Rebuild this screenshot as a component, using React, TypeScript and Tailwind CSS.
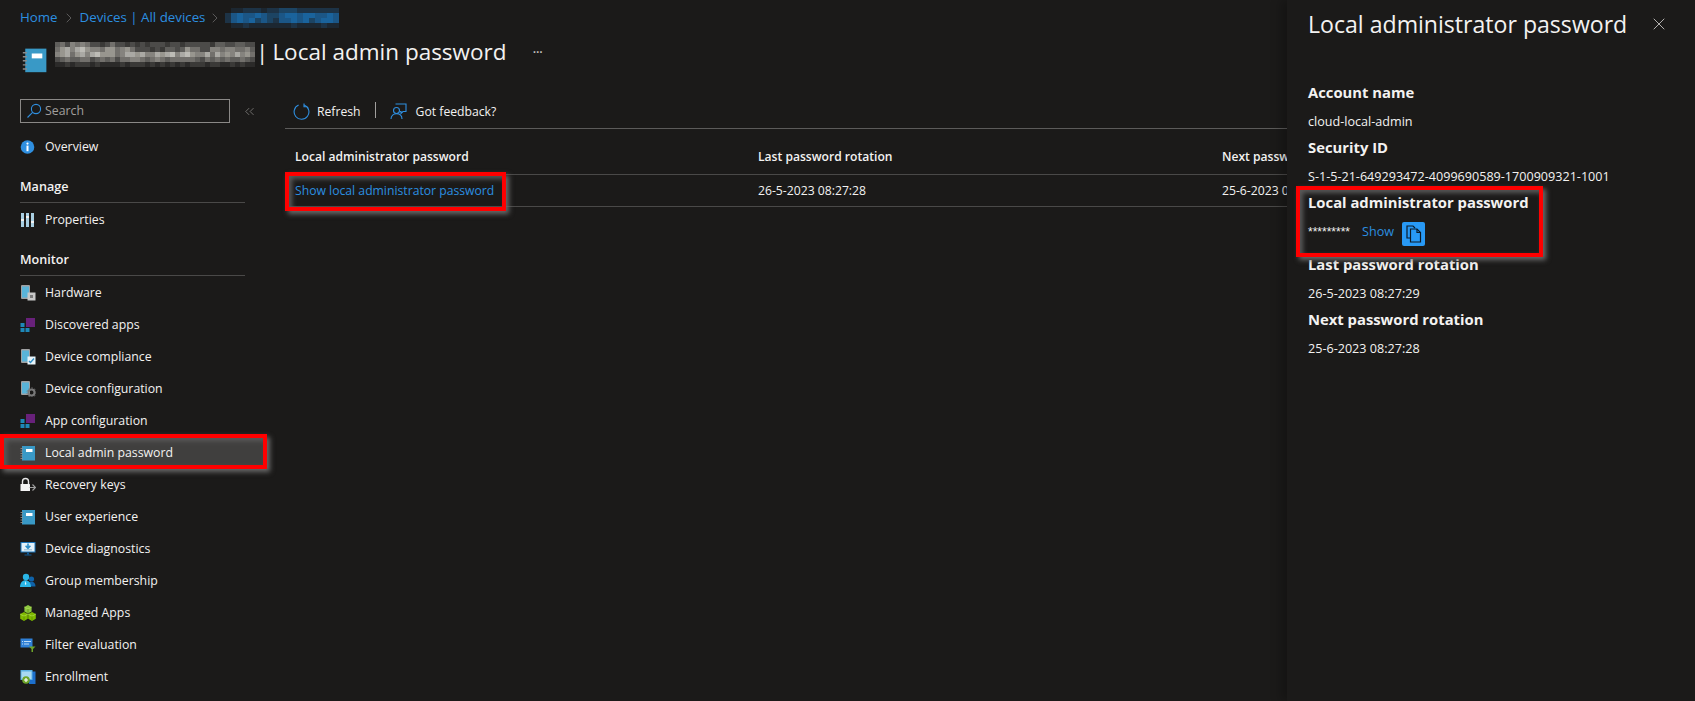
import { ChevronRight, ChevronsLeft, X } from "lucide-react";
import type { ReactNode } from "react";

const font = "font-['Open_Sans','Liberation_Sans',sans-serif]";

const grays = ["#1f1e1d", "#2b2a29", "#3a3937", "#4c4b49", "#5f5e5b", "#72706c", "#85837e", "#98968f", "#aaa9a4", "#bdbcb6"];
const blues = ["#1b1a19", "#1c2731", "#1d3346", "#1c4463", "#1b5686", "#1a639c"];

const titleBlur = [
  "4536565332353323232333233233333244334433",
  "5786897665775675333232443475533665665564",
  "6785786897775688786687896897668586768675",
  "3454455345453556654565455555435454544543",
  "1121222121111212221212121212221221121211",
];
const crumbBlur = ["0112221223332222222", "2454454334554554454", "2454534324454534554", "0112111111121111211"];

function Blur({ rows, colors, cell, cellH }: { rows: string[]; colors: string[]; cell: number; cellH: number }) {
  return (
    <svg width={rows[0].length * cell} height={rows.length * cellH} shapeRendering="crispEdges">
      {rows.map((r, y) =>
        r.split("").map((c, x) => <rect key={`${x}-${y}`} x={x * cell} y={y * cellH} width={cell} height={cellH} fill={colors[Number(c)]} />),
      )}
    </svg>
  );
}

function Phone({ children }: { children?: ReactNode }) {
  return (
    <svg width="16" height="16" viewBox="0 0 16 16">
      <rect x="1" y="0" width="9" height="14" rx="1" fill="#a0a1a2" />
      <rect x="2" y="1.5" width="7" height="11" fill="#59b4d9" />
      {children}
    </svg>
  );
}

const IconHardware = () => (
  <Phone>
    <rect x="7.5" y="7.5" width="8" height="8" fill="#c8c8c8" />
    <rect x="10" y="10" width="3" height="3" fill="#7a7a7a" />
  </Phone>
);
const IconCompliance = () => (
  <Phone>
    <rect x="7.5" y="7.5" width="8" height="8" fill="#e8f4fa" />
    <path d="M9 12l1.5 1.5L14 9.5" stroke="#2f8fc7" strokeWidth="1.4" fill="none" />
  </Phone>
);
const IconConfig = () => (
  <Phone>
    <circle cx="11.5" cy="11.5" r="3" fill="none" stroke="#7a7a7a" strokeWidth="2" />
    <circle cx="11.5" cy="11.5" r="4.6" fill="none" stroke="#7a7a7a" strokeWidth="1" strokeDasharray="1.4 1.6" />
  </Phone>
);
const IconApps = () => (
  <svg width="16" height="16" viewBox="0 0 16 16">
    <rect x="6" y="1" width="9" height="9" fill="#68217a" />
    <rect x="0.5" y="6" width="4" height="4" fill="#1e88b8" />
    <rect x="0.5" y="11" width="4" height="4" fill="#1e88b8" />
    <rect x="5.5" y="11" width="4" height="4" fill="#1e88b8" />
  </svg>
);
const IconNotebook = ({ size = 16 }: { size?: number }) => (
  <svg width={size} height={size} viewBox="0 0 16 16" preserveAspectRatio="none">
    <rect x="2" y="1" width="13" height="14.5" fill="#3999c6" />
    <path d="M0.5 3.5h2.5M0.5 6h2.5M0.5 8.5h2.5M0.5 11h2.5M0.5 13.5h2.5" stroke="#8c8c8c" strokeWidth="0.9" />
    <rect x="6" y="4" width="6.5" height="3" fill="#fff" />
  </svg>
);
const IconInfo = () => (
  <svg width="16" height="16" viewBox="0 0 16 16">
    <circle cx="7.5" cy="8" r="6.8" fill="#2f8fe0" />
    <circle cx="7.5" cy="4.6" r="1.1" fill="#fff" />
    <rect x="6.5" y="6.6" width="2" height="5.6" fill="#fff" />
  </svg>
);
const IconProps = () => (
  <svg width="16" height="16" viewBox="0 0 16 16">
    <rect x="1" y="1" width="3" height="14" fill="#a9cfe2" />
    <rect x="6" y="1" width="3" height="14" fill="#a9cfe2" />
    <rect x="11" y="1" width="3" height="14" fill="#a9cfe2" />
    <rect x="1" y="7" width="3" height="2" fill="#f2f2f2" />
    <rect x="6" y="4" width="3" height="2" fill="#f2f2f2" />
    <rect x="11" y="9" width="3" height="2" fill="#f2f2f2" />
  </svg>
);
const IconRecovery = () => (
  <svg width="16" height="16" viewBox="0 0 16 16">
    <path d="M2.5 7V4.5a3 3 0 0 1 6 0V7" stroke="#e6e6e6" strokeWidth="1.4" fill="none" />
    <rect x="0.5" y="7" width="9.5" height="7" rx="0.5" fill="#f4f4f4" />
    <path d="M9.5 10.5h6M12.5 7.5l3 3-3 3" stroke="#a0a0a0" strokeWidth="1.2" fill="none" />
  </svg>
);
const IconDiag = () => (
  <svg width="16" height="16" viewBox="0 0 16 16">
    <rect x="0.5" y="1" width="15" height="10.5" fill="#1b75bb" />
    <rect x="1.5" y="2" width="13" height="8.5" fill="#e4f2fa" />
    <path d="M8 2.5v4.5M5.6 4.8L8 7.4l2.4-2.6" stroke="#2f8fc7" strokeWidth="1.6" fill="none" />
    <rect x="4" y="8.3" width="8" height="1" fill="#8fb8d0" />
    <rect x="7" y="11.5" width="2" height="2" fill="#0f5a96" />
    <rect x="4.5" y="13.5" width="7" height="1" fill="#0f5a96" />
  </svg>
);
const IconGroup = () => (
  <svg width="16" height="16" viewBox="0 0 16 16">
    <circle cx="11.5" cy="6" r="2.6" fill="#0f62a8" />
    <path d="M7.5 13.5c0-3 1.5-4.7 4-4.7s4 1.7 4 4.7z" fill="#0f62a8" />
    <circle cx="6" cy="4" r="3.2" fill="#2ab5e5" />
    <path d="M0 14c0-4.2 2.5-6.8 5.5-6.8S11 9.8 11 14z" fill="#2ab5e5" />
    <path d="M5.6 8l-.8 3 .8 1 .8-1z" fill="#e4f6fc" />
  </svg>
);
const IconManaged = () => (
  <svg width="16" height="16" viewBox="0 0 16 16">
    <path d="M8 0l3.6 2v4.5L8 8.5 4.4 6.5V2z" fill="#8cc63f" />
    <path d="M4 7l3.8 2.1v4.7L4 16 0.2 13.8V9.1z" fill="#7fba00" />
    <path d="M12 7l3.8 2.1v4.7L12 16l-3.8-2.2V9.1z" fill="#7fba00" />
    <path d="M4.4 2L8 4l3.6-2M0.2 9.1L4 11.2l3.8-2.1M8.2 9.1L12 11.2l3.8-2.1" stroke="#b4e05a" strokeWidth="0.7" fill="none" />
    <path d="M4 11.2V16M12 11.2V16M8 4v4.5" stroke="#5a8a00" strokeWidth="0.7" />
  </svg>
);
const IconFilter = () => (
  <svg width="16" height="16" viewBox="0 0 16 16">
    <rect x="0.5" y="1.5" width="12" height="9" fill="#2f80d8" />
    <path d="M2 4.5h1M4 4.5h7M2 7h1M4 7h5" stroke="#cfe6f8" strokeWidth="0.9" />
    <path d="M9 9.5h6.5l-2.5 2.5v3h-1.5v-3z" fill="#6ea52a" />
  </svg>
);
const IconEnroll = () => (
  <svg width="16" height="16" viewBox="0 0 16 16">
    <rect x="9" y="2.5" width="6.5" height="12.5" fill="#1d6fcc" />
    <rect x="0.5" y="1" width="12" height="10" fill="#5bb0e3" />
    <rect x="1.5" y="2.5" width="10" height="7.5" fill="#a9d9f2" />
    <circle cx="6" cy="11" r="3.8" fill="#6ea52a" />
    <path d="M6 9v4M4 11h4" stroke="#fff" strokeWidth="1.2" />
  </svg>
);
const IconRefresh = () => (
  <svg width="17" height="17" viewBox="0 0 17 17" fill="none" stroke="#2f8fe0" strokeWidth="1.1">
    <path d="M5.6 2.1a7.4 7.4 0 1 0 5.6-.1" />
    <path d="M11 0.6v3.2H14" />
  </svg>
);
const IconFeedback = () => (
  <svg width="17" height="17" viewBox="0 0 17 17" fill="none" stroke="#2f8fe0" strokeWidth="1.1">
    <circle cx="6.5" cy="7.5" r="3" />
    <path d="M1 16c0-3.3 2.4-5.3 5.5-5.3S12 12.7 12 16" />
    <path d="M5.5 1H16v7.5h-3l-2 2v-2h-1" />
  </svg>
);
const IconCopy = () => (
  <svg width="16" height="18" viewBox="0 0 16 18" fill="none" stroke="#0b1a28" strokeWidth="1.2">
    <path d="M4 13H1V1h6l2 2" />
    <path d="M4.5 4h6.5l3.5 3.5V17h-10z" />
    <path d="M11 4v3.5h3.5" />
  </svg>
);
const IconSearch = () => (
  <svg width="16" height="16" viewBox="0 0 16 16" fill="none" stroke="#2f8fe0" strokeWidth="1.1">
    <circle cx="10" cy="6" r="4.6" />
    <path d="M6.6 9.4L1.5 14.5" />
  </svg>
);

function NavItem({ icon, label, active }: { icon: ReactNode; label: string; active?: boolean }) {
  return (
    <div className={`relative flex h-8 items-center pl-5 ${active ? "bg-[#403f3e]" : ""}`}>
      <span className="flex w-4 shrink-0 items-center justify-center">{icon}</span>
      <span className="ml-[9px] text-[12.3px] text-[#f3f2f1]">{label}</span>
      {active && (
        <div className="pointer-events-none absolute -top-[3px] left-0 h-[35px] w-[267px] border-4 border-[#ff0000] shadow-[3px_3px_5px_#6b6b6b,inset_3px_3px_5px_#5a5a5a]" />
      )}
    </div>
  );
}

function SectionHead({ label }: { label: string }) {
  return (
    <div className="mb-px ml-5 flex h-10 w-[225px] items-end border-b border-[#4a4948] pb-[5px] text-[12.6px] leading-5 font-semibold text-[#f3f2f1]">
      {label}
    </div>
  );
}

function Field({ label, value }: { label: string; value: string }) {
  return (
    <>
      <div className="h-[26px] text-[14.8px] leading-[24px] font-bold text-[#f3f2f1]">{label}</div>
      <div className="h-[29px] pt-[3px] text-[12.6px] leading-[26px] text-[#f3f2f1]">{value}</div>
    </>
  );
}

export default function App() {
  return (
    <div className={`relative flex h-[701px] w-[1695px] overflow-hidden bg-[#1b1a19] ${font}`}>
      <div className="w-[1287px] shrink-0 overflow-hidden">
        <div className="flex h-9 items-center pl-5 text-[13.3px] text-[#2b8fe0]">
          <span>Home</span>
          <ChevronRight className="mx-[3px] h-4 w-4 text-[#6b6a69]" strokeWidth={1.2} />
          <span>Devices | All devices</span>
          <ChevronRight className="mx-[2px] h-4 w-4 text-[#6b6a69]" strokeWidth={1.2} />
          <Blur rows={crumbBlur} colors={blues} cell={6} cellH={5} />
        </div>
        <div className="flex h-[63px] items-start pl-[22px]">
          <span className="mt-[11px]">
            <IconNotebook size={26} />
          </span>
          <div className="mt-[6px] ml-[7px] flex h-[24px]">
            <Blur rows={titleBlur} colors={grays} cell={5} cellH={5} />
          </div>
          <span className="ml-[1px] text-[22.5px] leading-[32px] text-[#f3f2f1]">|</span>
          <span className="ml-[4px] text-[22.5px] leading-[32px] text-[#f3f2f1]">Local admin password</span>
          <span className="ml-[26px] text-[15px] leading-[30px] tracking-tighter text-[#c8c6c4]">···</span>
        </div>
        <div className="flex">
          <aside className="w-[267px] shrink-0">
            <div className="flex items-center pl-5">
              <div className="flex h-6 w-[210px] items-center border border-[#8a8886] pl-[5px] text-[12.3px] text-[#a19f9d]">
                <IconSearch />
                <span className="ml-[3px] pt-px">Search</span>
              </div>
              <ChevronsLeft className="ml-[12px] h-[15px] w-[15px] text-[#8a8886]" strokeWidth={1.2} />
            </div>
            <div className="mt-2">
              <NavItem icon={<IconInfo />} label="Overview" />
            </div>
            <SectionHead label="Manage" />
            <NavItem icon={<IconProps />} label="Properties" />
            <SectionHead label="Monitor" />
            <NavItem icon={<IconHardware />} label="Hardware" />
            <NavItem icon={<IconApps />} label="Discovered apps" />
            <NavItem icon={<IconCompliance />} label="Device compliance" />
            <NavItem icon={<IconConfig />} label="Device configuration" />
            <NavItem icon={<IconApps />} label="App configuration" />
            <NavItem icon={<IconNotebook />} label="Local admin password" active />
            <NavItem icon={<IconRecovery />} label="Recovery keys" />
            <NavItem icon={<IconNotebook />} label="User experience" />
            <NavItem icon={<IconDiag />} label="Device diagnostics" />
            <NavItem icon={<IconGroup />} label="Group membership" />
            <NavItem icon={<IconManaged />} label="Managed Apps" />
            <NavItem icon={<IconFilter />} label="Filter evaluation" />
            <NavItem icon={<IconEnroll />} label="Enrollment" />
          </aside>
          <main className="ml-[18px] flex-1 text-[12.2px] text-[#f3f2f1]">
            <div className="flex h-[30px] items-start border-b border-[#5c5b5a] pl-2 leading-[26px]">
              <span className="flex h-6 items-center">
                <IconRefresh />
              </span>
              <span className="ml-[7px]">Refresh</span>
              <span className="mx-[14px] mt-[3px] h-[16px] w-px bg-[#a19f9d]" />
              <span className="flex h-6 items-center">
                <IconFeedback />
              </span>
              <span className="ml-[9px]">Got feedback?</span>
            </div>
            <div className="grid h-[46px] grid-cols-[463px_464px_1fr] items-center border-b border-[#4a4948] pt-[12px] pl-[10px] text-[12.1px] font-semibold whitespace-nowrap">
              <span>Local administrator password</span>
              <span>Last password rotation</span>
              <span>Next password rotation</span>
            </div>
            <div className="relative grid h-8 grid-cols-[463px_464px_1fr] items-center border-b border-[#4a4948] pt-[2px] pl-[10px] whitespace-nowrap">
              <span className="text-[#2b8fe0]">Show local administrator password</span>
              <span>26-5-2023 08:27:28</span>
              <span>25-6-2023 08:27:28</span>
              <div className="pointer-events-none absolute -top-[3px] left-0 h-[39px] w-[221px] border-4 border-[#ff0000] shadow-[3px_3px_5px_#6b6b6b,inset_3px_3px_5px_#5a5a5a]" />
            </div>
          </main>
        </div>
      </div>
      <aside className="relative w-[408px] shrink-0 bg-[#1b1a19] pl-[21px] shadow-[-6px_0_10px_rgba(0,0,0,0.25)]">
        <div className="flex h-12 items-center text-[#f3f2f1]">
          <h1 className="text-[23.1px] font-normal">Local administrator password</h1>
          <X className="absolute top-[14px] left-[362px] h-5 w-5 text-[#d2d0ce]" strokeWidth={1} />
        </div>
        <div className="pt-8">
          <Field label="Account name" value="cloud-local-admin" />
          <Field label="Security ID" value="S-1-5-21-649293472-4099690589-1700909321-1001" />
          <div className="h-[26px] text-[14.8px] leading-[24px] font-bold text-[#f3f2f1]">Local administrator password</div>
          <div className="flex h-9 items-start pt-[6px] text-[12.6px] leading-5">
            <span className="w-[54px] font-['Liberation_Sans',sans-serif] text-[12px] text-[#f3f2f1]">*********</span>
            <span className="w-[40px] text-[#2b8fe0]">Show</span>
            <span className="flex h-6 w-[23px] items-center justify-center rounded-[2px] bg-[#2899f5]">
              <IconCopy />
            </span>
          </div>
          <Field label="Last password rotation" value="26-5-2023 08:27:29" />
          <Field label="Next password rotation" value="25-6-2023 08:27:28" />
        </div>
        <div className="pointer-events-none absolute top-[186px] left-[9px] h-[71px] w-[247px] border-4 border-[#ff0000] shadow-[3px_3px_5px_#6b6b6b,inset_3px_3px_5px_#5a5a5a]" />
      </aside>
    </div>
  );
}
